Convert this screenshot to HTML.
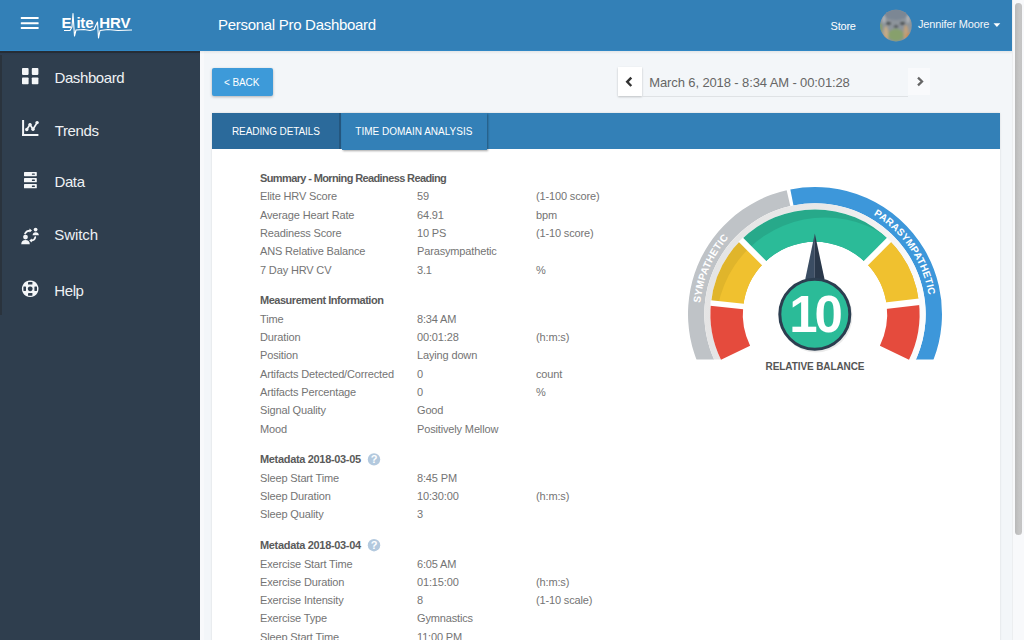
<!DOCTYPE html>
<html><head><meta charset="utf-8">
<style>
*{margin:0;padding:0;box-sizing:border-box}
html,body{width:1024px;height:640px;overflow:hidden;background:#f3f6f9;font-family:"Liberation Sans",sans-serif}
.abs{position:absolute}
#hdr{left:0;top:0;width:1012px;height:51px;background:#3380b7;border-bottom:1px solid #2f86c4}
#side{left:0;top:51px;width:200px;height:589px;background:#2f3e4e}
#sidetop{left:0;top:51px;width:200px;height:4px;background:linear-gradient(#252d36 0,#252d36 50%,#2b3b4e 50%,#2d3d50 100%)}
#sideedge{left:0;top:55px;width:2px;height:260px;background:#2a333d}
#mainshadow{left:200px;top:51px;width:812px;height:3px;background:linear-gradient(rgba(0,0,0,.07),rgba(0,0,0,0))}
#mainedge{left:200px;top:51px;width:4px;height:589px;background:#f8f9fb}
#sb{left:1012px;top:0;width:12px;height:640px;background:#f8f9fb;border-left:1px solid #eceef0}
#thumb{left:1015px;top:3px;width:7px;height:532px;background:linear-gradient(90deg,#b9b9b9,#c6c6c6 60%,#c3c3c3);border-radius:4px}
#back{left:212px;top:68px;width:61px;height:28px;background:#3d9ad9;border-radius:2px;box-shadow:0 1px 3px rgba(0,0,0,.28)}
#prev{left:618px;top:67px;width:24px;height:29px;background:#fff;box-shadow:0 1px 2px rgba(0,0,0,.22)}
#next{left:908px;top:68px;width:22px;height:27px;background:#f9fafc}
#uline{left:642px;top:96px;width:266px;height:1px;background:#dfe2e5}
#card{left:212px;top:113px;width:788px;height:540px;background:#fff;box-shadow:0 0 2px rgba(0,0,0,.12)}
#tabs{left:212px;top:113px;width:788px;height:36px;background:#3380b7}
#tab1{left:212px;top:113px;width:129px;height:36px;background:#2b6a9b;border-right:2px solid #24567e}
#tab2{left:342px;top:113px;width:145px;height:37px;background:#3380b7;box-shadow:1px 1px 2px rgba(0,0,0,.35)}
svg{position:absolute;left:0;top:0}
text{font-family:"Liberation Sans",sans-serif}
.tb text{font-size:11px;fill:#747474;letter-spacing:-0.15px}
.tb text.h{font-weight:bold;fill:#5a5a5a}
</style></head><body>
<div id="hdr" class="abs"></div>
<div id="side" class="abs"></div>
<div id="sidetop" class="abs"></div>
<div id="sideedge" class="abs"></div>
<div id="mainedge" class="abs"></div>
<div id="mainshadow" class="abs"></div>
<div id="sb" class="abs"></div>
<div id="thumb" class="abs"></div>
<div id="back" class="abs"></div>
<div id="prev" class="abs"></div>
<div id="next" class="abs"></div>
<div id="uline" class="abs"></div>
<div id="card" class="abs"></div>
<div id="tabs" class="abs"></div>
<div id="tab1" class="abs"></div>
<div id="tab2" class="abs"></div>
<svg width="1024" height="640" viewBox="0 0 1024 640">
<!-- header -->
<g fill="#fff">
 <rect x="20.8" y="17.1" width="17.8" height="2" rx="0.5"/>
 <rect x="20.8" y="22.2" width="17.8" height="2" rx="0.5"/>
 <rect x="20.8" y="27.1" width="17.8" height="2" rx="0.5"/>
</g>
<g fill="#fff" font-weight="bold" font-size="15">
 <text x="61.5" y="27.6" letter-spacing="-0.5">E</text>
 <text x="76.4" y="27.6" letter-spacing="-0.2">ite</text>
 <text x="99.3" y="27.6" letter-spacing="-0.1">HRV</text>
</g>
<polyline points="64,30.5 70,30.5 72,27 73,13.5 74.5,36 76,30 84,29.5 90,30.5 94,29.5 96,25 97.5,22 98.5,38 100,30.5 108,29.5 118,30.5 132,30" fill="none" stroke="#fff" stroke-width="1.1" stroke-linejoin="round"/>
<text x="218" y="30.3" font-size="15" fill="#fff" letter-spacing="-0.29">Personal Pro Dashboard</text>
<text x="830.5" y="29.6" font-size="11" fill="#fff" letter-spacing="-0.2">Store</text>
<text x="918" y="28.3" font-size="11" fill="#f2f6fa" letter-spacing="-0.15">Jennifer Moore</text>
<path d="M993.5 23.3 L1000.3 23.3 L996.9 27 Z" fill="#fff"/>
<!-- avatar -->
<defs>
 <clipPath id="avc"><circle cx="896" cy="25.6" r="15.8"/></clipPath>
 <filter id="blur1" x="-50%" y="-50%" width="200%" height="200%"><feGaussianBlur stdDeviation="1.2"/></filter>
</defs>
<g clip-path="url(#avc)">
 <rect x="878" y="8" width="36" height="36" fill="#8d949b"/>
 <g filter="url(#blur1)">
  <ellipse cx="896" cy="14" rx="12" ry="6" fill="#7c8794"/>
  <ellipse cx="896" cy="35" rx="8" ry="6" fill="#87a06c"/>
  <ellipse cx="886" cy="34" rx="2.5" ry="8" fill="#c2aa88"/>
  <ellipse cx="906" cy="33" rx="2.5" ry="8" fill="#bfa07c"/>
  <ellipse cx="883" cy="39" rx="3" ry="3" fill="#c08a5a"/>
  <ellipse cx="909" cy="37" rx="3" ry="4" fill="#c48c5c"/>
  <ellipse cx="888.5" cy="23.5" rx="2.5" ry="1.4" fill="#4a4e50"/>
  <ellipse cx="902.5" cy="23.5" rx="2.5" ry="1.4" fill="#4a4e50"/>
  <ellipse cx="896" cy="26.5" rx="2.2" ry="1.6" fill="#555a5c"/>
  <ellipse cx="884" cy="19" rx="1.5" ry="4" fill="#b0b4b8"/>
  <ellipse cx="908" cy="19" rx="1.5" ry="4" fill="#b0b4b8"/>
  <ellipse cx="880" cy="28" rx="2" ry="5" fill="#86a060"/>
 </g>
</g>
<!-- sidebar -->
<g fill="#f4f6f8">
 <rect x="22" y="68.1" width="6.6" height="6.8" rx="0.8"/>
 <rect x="31.8" y="68.1" width="6.6" height="6.8" rx="0.8"/>
 <rect x="22" y="77.4" width="6.6" height="6.8" rx="0.8"/>
 <rect x="31.8" y="77.4" width="6.6" height="6.8" rx="0.8"/>
 <rect x="22.1" y="120" width="2" height="16"/>
 <rect x="22.1" y="134" width="16.3" height="2"/>
 <circle cx="26.8" cy="129.5" r="1.7"/><circle cx="30" cy="124.6" r="1.7"/><circle cx="33" cy="129.3" r="1.7"/><circle cx="37.1" cy="122.6" r="1.7"/>
 <rect x="24" y="172" width="12.8" height="4.2" rx="0.6"/>
 <rect x="24" y="178.1" width="12.8" height="4.2" rx="0.6"/>
 <rect x="24" y="184.1" width="12.8" height="4.2" rx="0.6"/>
 <circle cx="25.5" cy="237.1" r="2.4"/>
 <path d="M21.2 244.3 Q21.5 240.1 25.5 240.1 Q29.5 240.1 29.8 244.3 Z"/>
 <circle cx="35.6" cy="229.6" r="1.9"/>
 <path d="M32.6 235.2 Q32.9 232.3 35.7 232.3 Q38.6 232.3 38.9 235.2 Z"/>
 <path fill-rule="evenodd" d="M30.2 280.5 a8.3 8.3 0 1 0 0.01 0 Z M30.2 286.4 a2.4 2.4 0 1 0 0.01 0 Z"/>
</g>
<g stroke="#f4f6f8" stroke-width="1.7" fill="none" stroke-linecap="round">
 <polyline points="26.8,129.5 30,124.6 33,129.3 37.1,122.6"/>
 <path d="M25 233.6 Q26.5 230.6 30 230.6"/>
 <path d="M35.3 237.1 Q34.8 240.4 31.2 240.6"/>
</g>
<g fill="#f4f6f8">
 <path d="M29.5 228.6 L32 230.6 L29.5 232.6 Z"/>
 <path d="M31.8 238.6 L29.3 240.6 L31.8 242.6 Z"/>
</g>
<g fill="#2f3e4e">
 <rect x="31.9" y="173.4" width="3" height="1.4" rx="0.5"/>
 <rect x="31.9" y="179.5" width="3" height="1.4" rx="0.5"/>
 <rect x="31.9" y="185.5" width="3" height="1.4" rx="0.5"/>
 <rect x="28" y="282" width="4.4" height="2.6" rx="0.4"/>
 <rect x="28" y="293.1" width="4.4" height="2.6" rx="0.4"/>
 <rect x="23.4" y="286.6" width="2.6" height="4.4" rx="0.4"/>
 <rect x="34.4" y="286.6" width="2.6" height="4.4" rx="0.4"/>
</g>
<g font-size="15" fill="#eef1f4" letter-spacing="-0.4">
 <text x="54.5" y="83.4">Dashboard</text>
 <text x="54.8" y="135.5">Trends</text>
 <text x="54.5" y="187.4">Data</text>
 <text x="54.3" y="240" letter-spacing="-0.1">Switch</text>
 <text x="54.3" y="296.3">Help</text>
</g>
<!-- top controls -->
<text x="224" y="85.6" font-size="10" fill="#fff" letter-spacing="-0.1">&lt; BACK</text>
<path d="M631.3 77.6 L627.2 81.8 L631.3 86" fill="none" stroke="#333" stroke-width="2.4"/>
<path d="M918 77.6 L922 81.5 L918 85.4" fill="none" stroke="#666" stroke-width="2.3"/>
<text x="649.3" y="86.9" font-size="13" fill="#666" letter-spacing="-0.12">March 6, 2018 - 8:34 AM - 00:01:28</text>
<text x="232" y="135.3" font-size="10" fill="#fff" letter-spacing="-0.1">READING DETAILS</text>
<text x="355.3" y="135.3" font-size="10" fill="#fff" letter-spacing="0">TIME DOMAIN ANALYSIS</text>
<!-- table -->
<g class="tb">
<text x="260" y="182.0" class="h" style="letter-spacing:-0.62px">Summary - Morning Readiness Reading</text>
<text x="260" y="200.3">Elite HRV Score</text><text x="417" y="200.3">59</text><text x="536" y="200.3">(1-100 score)</text>
<text x="260" y="218.6">Average Heart Rate</text><text x="417" y="218.6">64.91</text><text x="536" y="218.6">bpm</text>
<text x="260" y="236.9">Readiness Score</text><text x="417" y="236.9">10 PS</text><text x="536" y="236.9">(1-10 score)</text>
<text x="260" y="255.2">ANS Relative Balance</text><text x="417" y="255.2">Parasympathetic</text>
<text x="260" y="273.5">7 Day HRV CV</text><text x="417" y="273.5">3.1</text><text x="536" y="273.5">%</text>
<text x="260" y="304.4" class="h" style="letter-spacing:-0.48px">Measurement Information</text>
<text x="260" y="322.7">Time</text><text x="417" y="322.7">8:34 AM</text>
<text x="260" y="341.0">Duration</text><text x="417" y="341.0">00:01:28</text><text x="536" y="341.0">(h:m:s)</text>
<text x="260" y="359.3">Position</text><text x="417" y="359.3">Laying down</text>
<text x="260" y="377.6">Artifacts Detected/Corrected</text><text x="417" y="377.6">0</text><text x="536" y="377.6">count</text>
<text x="260" y="395.9">Artifacts Percentage</text><text x="417" y="395.9">0</text><text x="536" y="395.9">%</text>
<text x="260" y="414.2">Signal Quality</text><text x="417" y="414.2">Good</text>
<text x="260" y="432.5">Mood</text><text x="417" y="432.5">Positively Mellow</text>
<text x="260" y="463.4" class="h" style="letter-spacing:-0.33px">Metadata 2018-03-05</text>
<g transform="translate(374,459.4000000000001)"><circle r="6.2" fill="#b3c9de"/><text y="4" text-anchor="middle" style="font-size:11px;font-weight:bold;fill:#fff;letter-spacing:0">?</text></g>
<text x="260" y="481.7">Sleep Start Time</text><text x="417" y="481.7">8:45 PM</text>
<text x="260" y="500.0">Sleep Duration</text><text x="417" y="500.0">10:30:00</text><text x="536" y="500.0">(h:m:s)</text>
<text x="260" y="518.3">Sleep Quality</text><text x="417" y="518.3">3</text>
<text x="260" y="549.2" class="h" style="letter-spacing:-0.33px">Metadata 2018-03-04</text>
<g transform="translate(374,545.2)"><circle r="6.2" fill="#b3c9de"/><text y="4" text-anchor="middle" style="font-size:11px;font-weight:bold;fill:#fff;letter-spacing:0">?</text></g>
<text x="260" y="567.5">Exercise Start Time</text><text x="417" y="567.5">6:05 AM</text>
<text x="260" y="585.8">Exercise Duration</text><text x="417" y="585.8">01:15:00</text><text x="536" y="585.8">(h:m:s)</text>
<text x="260" y="604.1">Exercise Intensity</text><text x="417" y="604.1">8</text><text x="536" y="604.1">(1-10 scale)</text>
<text x="260" y="622.4">Exercise Type</text><text x="417" y="622.4">Gymnastics</text>
<text x="260" y="640.7">Sleep Start Time</text><text x="417" y="640.7">11:00 PM</text>
</g>
<!-- gauge -->
<clipPath id="gclip"><rect x="600" y="150" width="400" height="209.6"/></clipPath>
<g clip-path="url(#gclip)">
<path d="M717.71 395.63A127 127 0 0 1 786.65 190.21L790.29 206.09A110.7 110.7 0 0 0 730.20 385.16Z" fill="#bfc3c7"/>
<path d="M790.33 189.42A127 127 0 0 1 912.29 395.63L899.80 385.16A110.7 110.7 0 0 0 793.50 205.41Z" fill="#3d97da"/>
<linearGradient id="lg" gradientUnits="userSpaceOnUse" x1="690" y1="0" x2="935" y2="0"><stop offset="0" stop-color="#e4e4e4"/><stop offset="0.55" stop-color="#e8e8e8"/><stop offset="0.8" stop-color="#f4f4f4"/><stop offset="1" stop-color="#fff"/></linearGradient>
<path d="M730.20 385.16A110.7 110.7 0 1 1 899.80 385.16L895.13 381.24A104.6 104.6 0 1 0 734.87 381.24Z" fill="url(#lg)"/>
</g>
<path d="M720.99 359.85A104.6 104.6 0 0 1 710.97 303.07L743.20 306.45A72.2 72.2 0 0 0 750.11 345.65Z" fill="#e54b3d"/>
<clipPath id="sc1"><path d="M710.97 303.07A104.6 104.6 0 0 1 741.04 240.04L763.95 262.95A72.2 72.2 0 0 0 743.20 306.45Z"/></clipPath>
<path d="M710.97 303.07A104.6 104.6 0 0 1 741.04 240.04L763.95 262.95A72.2 72.2 0 0 0 743.20 306.45Z" fill="#e0b52b"/>
<circle cx="825" cy="326.3" r="108.9" fill="#f0c12f" clip-path="url(#sc1)"/>
<clipPath id="sc2"><path d="M741.04 240.04A104.6 104.6 0 0 1 888.96 240.04L866.05 262.95A72.2 72.2 0 0 0 763.95 262.95Z"/></clipPath>
<path d="M741.04 240.04A104.6 104.6 0 0 1 888.96 240.04L866.05 262.95A72.2 72.2 0 0 0 763.95 262.95Z" fill="#27a98a"/>
<circle cx="825" cy="326.3" r="108.9" fill="#2bbb98" clip-path="url(#sc2)"/>
<clipPath id="sc3"><path d="M888.96 240.04A104.6 104.6 0 0 1 918.89 301.80L886.71 305.58A72.2 72.2 0 0 0 866.05 262.95Z"/></clipPath>
<path d="M888.96 240.04A104.6 104.6 0 0 1 918.89 301.80L886.71 305.58A72.2 72.2 0 0 0 866.05 262.95Z" fill="#e0b52b"/>
<circle cx="825" cy="326.3" r="108.9" fill="#f0c12f" clip-path="url(#sc3)"/>
<path d="M918.89 301.80A104.6 104.6 0 0 1 909.01 359.85L879.89 345.65A72.2 72.2 0 0 0 886.71 305.58Z" fill="#e54b3d"/>
<path d="M755.33 307.73L710.48 303.01" stroke="#fff" stroke-width="5.5"/>
<path d="M772.57 271.57L740.68 239.68" stroke="#fff" stroke-width="6"/>
<path d="M857.43 271.57L889.32 239.68" stroke="#fff" stroke-width="6"/>
<path d="M874.59 307.00L919.38 301.74" stroke="#fff" stroke-width="6.5"/>
<path id="symp" d="M700.33 302.96A115.2 115.2 0 0 1 740.95 225.75" fill="none"/>
<path id="para" d="M873.47 214.74A115.2 115.2 0 0 1 930.20 314.00" fill="none"/>
<text font-size="10" font-weight="bold" fill="#fff" letter-spacing="0.2"><textPath href="#symp">SYMPATHETIC</textPath></text>
<text font-size="10" font-weight="bold" fill="#fff" letter-spacing="0.2"><textPath href="#para">PARASYMPATHETIC</textPath></text>
<path d="M814.8 233.5 L805.3 279 L814.8 279 Z" fill="#3b4d63"/>
<path d="M814.8 233.5 L824.5 279 L814.8 279 Z" fill="#2a384a"/>
<circle cx="816" cy="316" r="36.5" fill="rgba(0,0,0,0.08)"/>
<circle cx="814.8" cy="314.3" r="35" fill="#2bbb98" stroke="#2c3e50" stroke-width="3"/>
<text x="814.5" y="331.6" font-size="51" font-weight="bold" fill="#fff" text-anchor="middle" letter-spacing="-3">10</text>
<text x="815" y="369.7" font-size="10" font-weight="bold" fill="#555" text-anchor="middle" letter-spacing="-0.1">RELATIVE BALANCE</text>
</svg>
</body></html>
